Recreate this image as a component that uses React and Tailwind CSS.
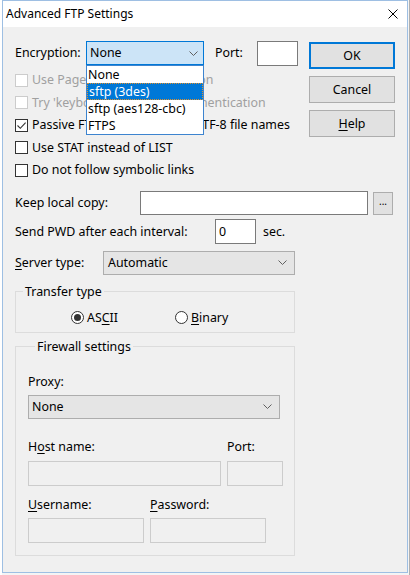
import { useState } from "react";

const Chevron = () => (
  <svg width="9" height="5" viewBox="0 0 9 5" className="shrink-0">
    <path d="M0.5 0.5 L4.5 4.5 L8.5 0.5" fill="none" stroke="#606060" strokeWidth="1" />
  </svg>
);

const Checkbox = ({ checked, disabled }) => (
  <span
    className={`flex h-[13px] w-[13px] shrink-0 items-center justify-center border bg-white ${
      disabled ? "border-[#cccccc]" : "border-[#333333]"
    }`}
  >
    {checked && (
      <svg width="11" height="11" viewBox="0 0 11 11">
        <path d="M1.5 5.5 L4.3 8.3 L9.6 2.6" fill="none" stroke="#333" strokeWidth="1.1" />
      </svg>
    )}
  </span>
);

const Radio = ({ checked }) => (
  <span className="flex h-[13px] w-[13px] shrink-0 items-center justify-center rounded-full border border-[#333333] bg-white">
    {checked && <span className="h-[7px] w-[7px] rounded-full bg-[#333333]" />}
  </span>
);

const U = ({ children }) => <span className="underline underline-offset-[2px]">{children}</span>;

const Check = ({ checked, disabled, children, className = "" }) => (
  <div className={`flex items-center gap-[4px] ${className}`}>
    <Checkbox checked={checked} disabled={disabled} />
    <span className={`whitespace-nowrap ${disabled ? "text-[#a0a0a0]" : ""}`}>{children}</span>
  </div>
);

const Button = ({ children, primary }) => (
  <div
    className={`flex h-[27px] w-[86px] items-center justify-center bg-[#e1e1e1] ${
      primary ? "border-2 border-[#0078d7]" : "border border-[#adadad]"
    }`}
  >
    {children}
  </div>
);

const encryptionOptions = ["None", "sftp (3des)", "sftp (aes128-cbc)", "FTPS"];

export default function App() {
  const [transfer, setTransfer] = useState("ascii");

  return (
    <div className="flex h-[575px] w-[410px] overflow-hidden bg-[#f4f4f4] font-['Noto_Sans',sans-serif] text-[12.4px] leading-[16px] text-black">
      <div className="w-[2px] shrink-0 bg-white" />
      <div className="flex h-[573px] w-[406px] shrink-0 flex-col border border-[#9ebfe3] bg-[#f0f0f0]">
        {/* title bar */}
        <div className="flex h-[26px] shrink-0 items-center justify-between bg-white pl-[3px] pr-[9px] text-[12px]">
          <span>Advanced FTP Settings</span>
          <svg width="10" height="10" viewBox="0 0 10 10">
            <path d="M0.5 0.5 L9.5 9.5 M9.5 0.5 L0.5 9.5" stroke="#000" strokeWidth="1" />
          </svg>
        </div>

        <div className="flex flex-col pl-[12px] pt-[14px]">
          <div className="flex">
            <div className="flex w-[294px] flex-col">
              <div className="flex h-[25px] items-start">
                <span className="w-[71px] pt-[4px]">Encryption:</span>
                <div className="relative z-10">
                  <div className="flex h-[24px] w-[118px] items-center justify-between border border-[#0078d7] bg-[#cce4f7] pl-[3px] pr-[5px]">
                    <span>None</span>
                    <Chevron />
                  </div>
                  <div className="absolute left-0 top-full flex w-[118px] flex-col border border-[#3d84cf] bg-white">
                    {encryptionOptions.map((o) => (
                      <div
                        key={o}
                        className={`flex h-[17px] items-center whitespace-nowrap pl-[1px] ${
                          o === "sftp (3des)"
                            ? "border border-dotted border-[#e0902c] bg-[#0078d7] text-white"
                            : ""
                        }`}
                      >
                        {o}
                      </div>
                    ))}
                  </div>
                </div>
                <span className="ml-[11px] w-[42px] pt-[4px]">Port:</span>
                <div className="h-[25px] w-[41px] border border-[#7a7a7a] bg-white" />
              </div>
              <div className="mt-[3px] flex flex-col">
                <Check disabled className="h-[22.5px]">Use Pageant for authentication</Check>
                <Check disabled className="h-[22.5px]">Try 'keyboard-interactive' authentication</Check>
                <div className="flex h-[22.5px] items-center">
                  <Check checked className="w-[136px]">Passive FTP mode</Check>
                  <Check>Use UTF-8 file names</Check>
                </div>
                <Check className="h-[22.5px]">Use STAT instead of LIST</Check>
                <Check className="h-[22.5px]">Do not follow symbolic links</Check>
              </div>
            </div>
            <div className="flex flex-col gap-[7px] pt-[1px]">
              <Button primary>OK</Button>
              <Button>Cancel</Button>
              <Button>
                <U>H</U>elp
              </Button>
            </div>
          </div>

          <div className="mt-[9.5px] flex items-center">
            <span className="w-[125px]">Keep local copy:</span>
            <div className="h-[24px] w-[228px] border border-[#7a7a7a] bg-white" />
            <div className="ml-[5px] flex h-[23px] w-[20px] items-center justify-center border border-[#adadad] bg-[#e1e1e1] pb-[4px] text-[10px]">
              ...
            </div>
          </div>

          <div className="mt-[4px] flex items-center">
            <span className="w-[200px]">Send PWD after each interval:</span>
            <div className="flex h-[25px] w-[41px] items-center border border-[#7a7a7a] bg-white pl-[3px]">0</div>
            <span className="ml-[7px]">sec.</span>
          </div>

          <div className="mt-[6.5px] flex items-center">
            <span className="w-[88px]">
              <U>S</U>erver type:
            </span>
            <div className="flex h-[24px] w-[192px] items-center justify-between border border-[#adadad] bg-[#e5e5e5] pl-[4px] pr-[7px]">
              <span>Automatic</span>
              <Chevron />
            </div>
          </div>

          <fieldset className="mt-[9px] w-[280px] border border-[#dcdcdc] pb-[6px] pt-[10px]">
            <legend className="ml-[7px] px-[2px]">Transfer type</legend>
            <div className="flex h-[16px] items-center pl-[55px]">
              <button className="flex w-[104px] items-center gap-[3px]" onClick={() => setTransfer("ascii")}>
                <Radio checked={transfer === "ascii"} />
                <span>
                  AS<U>C</U>II
                </span>
              </button>
              <button className="flex items-center gap-[3px]" onClick={() => setTransfer("binary")}>
                <Radio checked={transfer === "binary"} />
                <span>
                  <U>B</U>inary
                </span>
              </button>
            </div>
          </fieldset>

          <fieldset className="mt-[6px] w-[280px] border border-[#dcdcdc] pb-[12px] pl-[12px] pt-[19px]">
            <legend className="ml-[7px] px-[2px]">Firewall settings</legend>
            <div>Proxy:</div>
            <div className="mt-[5.3px] flex h-[24px] w-[252px] items-center justify-between border border-[#adadad] bg-[#e5e5e5] pl-[3px] pr-[7px]">
              <span>None</span>
              <Chevron />
            </div>

            <div className="mt-[20.4px] flex">
              <span className="w-[199px]">
                H<U>o</U>st name:
              </span>
              <span>Port:</span>
            </div>
            <div className="mt-[5.6px] flex gap-[6px]">
              <div className="h-[25px] w-[193px] border border-[#cccccc] bg-[#f0f0f0]" />
              <div className="h-[25px] w-[56px] border border-[#cccccc] bg-[#f0f0f0]" />
            </div>

            <div className="mt-[11.7px] flex">
              <span className="w-[122px]">
                <U>U</U>sername:
              </span>
              <span>
                <U>P</U>assword:
              </span>
            </div>
            <div className="mt-[4.3px] flex gap-[6px]">
              <div className="h-[25px] w-[116px] border border-[#cccccc] bg-[#f0f0f0]" />
              <div className="h-[25px] w-[116px] border border-[#cccccc] bg-[#f0f0f0]" />
            </div>
          </fieldset>
        </div>
      </div>
      <div className="ml-[1px] w-[1px] shrink-0 bg-[#b0b0b0]" />
    </div>
  );
}
